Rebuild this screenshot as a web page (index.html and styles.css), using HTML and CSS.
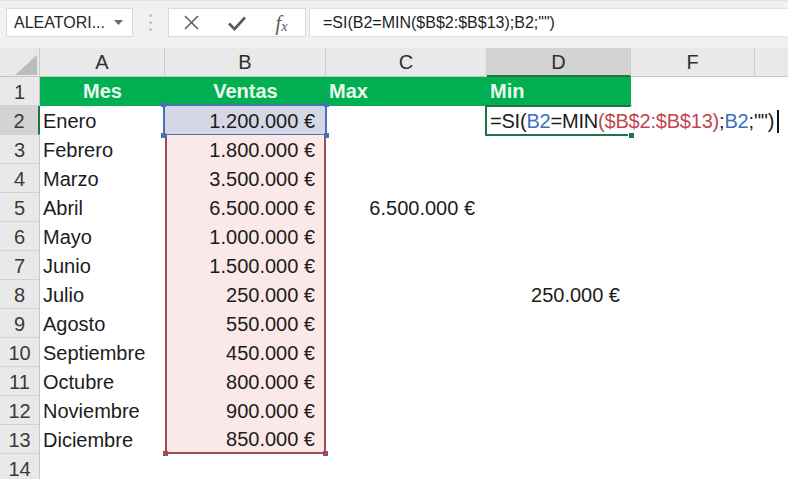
FILE: index.html
```html
<!DOCTYPE html>
<html lang="es">
<head>
<meta charset="utf-8">
<title>Excel MIN</title>
<link rel="stylesheet" href="styles.css">
</head>
<body>
<div class="toolbar">
  <div class="namebox">
    <span class="nb-text">ALEATORI...</span>
    <svg class="nb-arrow" width="9" height="5" viewBox="0 0 9 5"><polygon points="0,0 9,0 4.5,5" fill="#6a6a6a"/></svg>
  </div>
  <div class="grip"><i></i><i></i><i></i></div>
  <div class="fxbox">
    <span class="slot"><svg width="17" height="17" viewBox="0 0 17 17"><path d="M2 2 L15 15 M15 2 L2 15" stroke="#5a5a5a" stroke-width="1.5" fill="none"/></svg></span>
    <span class="slot"><svg width="20" height="16" viewBox="0 0 20 16"><path d="M2 8.5 L7.5 14 L18 2.5" stroke="#5a5a5a" stroke-width="2.6" fill="none" stroke-linejoin="miter"/></svg></span>
    <span class="slot"><span class="fx">f<span class="fxx">x</span></span></span>
  </div>
  <div class="formula">=SI(B2=MIN($B$2:$B$13);B2;"")</div>
</div>

<div class="sheet">
  <div class="ch corner"><svg width="40" height="29" viewBox="0 0 40 29"><polygon points="37,7 37,27 15,27" fill="#bcbcbc"/></svg></div>
  <div class="ch">A</div>
  <div class="ch">B</div>
  <div class="ch">C</div>
  <div class="ch selh">D</div>
  <div class="ch">F</div>
  <div class="ch last"></div>

  <div class="rh">1</div>
  <div class="c g ctr hd">Mes</div>
  <div class="c g ctr hd">Ventas</div>
  <div class="c g hd">Max</div>
  <div class="c g hd">Min</div>
  <div class="c"></div>
  <div class="c"></div>

  <div class="rh selr">2</div>
  <div class="c">Enero</div>
  <div class="c r blue">1.200.000 €<span class="hnd tl bh"></span><span class="hnd tr bh"></span><span class="hnd bl bh"></span><span class="hnd br bh"></span></div>
  <div class="c"></div>
  <div class="c active"><span class="edit">=SI(<span class="rb">B2</span>=MIN<span class="rr">($B$2:$B$13)</span>;<span class="rb">B2</span>;"")<span class="caret"></span></span><span class="fill"></span></div>
  <div class="c"></div>
  <div class="c"></div>

  <div class="rh">3</div>
  <div class="c">Febrero</div>
  <div class="c r rng">1.800.000 €</div>
  <div class="c"></div><div class="c"></div><div class="c"></div><div class="c"></div>

  <div class="rh">4</div>
  <div class="c">Marzo</div>
  <div class="c r rng">3.500.000 €</div>
  <div class="c"></div><div class="c"></div><div class="c"></div><div class="c"></div>

  <div class="rh">5</div>
  <div class="c">Abril</div>
  <div class="c r rng">6.500.000 €</div>
  <div class="c r pad12">6.500.000 €</div>
  <div class="c"></div><div class="c"></div><div class="c"></div>

  <div class="rh">6</div>
  <div class="c">Mayo</div>
  <div class="c r rng">1.000.000 €</div>
  <div class="c"></div><div class="c"></div><div class="c"></div><div class="c"></div>

  <div class="rh">7</div>
  <div class="c">Junio</div>
  <div class="c r rng">1.500.000 €</div>
  <div class="c"></div><div class="c"></div><div class="c"></div><div class="c"></div>

  <div class="rh">8</div>
  <div class="c">Julio</div>
  <div class="c r rng">250.000 €</div>
  <div class="c"></div>
  <div class="c r">250.000 €</div>
  <div class="c"></div><div class="c"></div>

  <div class="rh">9</div>
  <div class="c">Agosto</div>
  <div class="c r rng">550.000 €</div>
  <div class="c"></div><div class="c"></div><div class="c"></div><div class="c"></div>

  <div class="rh">10</div>
  <div class="c">Septiembre</div>
  <div class="c r rng">450.000 €</div>
  <div class="c"></div><div class="c"></div><div class="c"></div><div class="c"></div>

  <div class="rh">11</div>
  <div class="c">Octubre</div>
  <div class="c r rng">800.000 €</div>
  <div class="c"></div><div class="c"></div><div class="c"></div><div class="c"></div>

  <div class="rh">12</div>
  <div class="c">Noviembre</div>
  <div class="c r rng">900.000 €</div>
  <div class="c"></div><div class="c"></div><div class="c"></div><div class="c"></div>

  <div class="rh">13</div>
  <div class="c">Diciembre</div>
  <div class="c r rng end">850.000 €<span class="hnd bl rh2"></span><span class="hnd br rh2"></span></div>
  <div class="c"></div><div class="c"></div><div class="c"></div><div class="c"></div>

  <div class="rh">14</div>
  <div class="c"></div><div class="c"></div><div class="c"></div><div class="c"></div><div class="c"></div><div class="c"></div>
</div>
</body>
</html>
```

FILE: styles.css
```css
html, body {
  margin: 0;
  padding: 0;
}
body {
  width: 788px;
  height: 479px;
  overflow: hidden;
  background: #f1f1f1;
  font-family: "Liberation Sans", Arial, sans-serif;
  color: #1c1c1c;
}

/* ---------- toolbar ---------- */
.toolbar {
  height: 44px;
  box-sizing: border-box;
  padding: 7px 0 0 6px;
  display: flex;
  align-items: flex-start;
  border-top: 1px solid #e2e2e2;
}
.namebox {
  width: 127px;
  height: 29px;
  box-sizing: border-box;
  background: #fff;
  border: 1px solid #dadada;
  display: flex;
  align-items: center;
  padding-left: 7px;
  padding-right: 9px;
}
.nb-text {
  flex: 1;
  font-size: 16px;
  color: #262626;
}
.nb-arrow {
  display: block;
}
.grip {
  width: 35px;
  height: 29px;
  display: flex;
  flex-direction: column;
  align-items: center;
  justify-content: center;
  gap: 4px;
}
.grip i {
  display: block;
  width: 3px;
  height: 3px;
  border-radius: 50%;
  background: #c2c2c2;
}
.fxbox {
  width: 138px;
  height: 29px;
  box-sizing: border-box;
  background: #fff;
  border: 1px solid #dadada;
  display: flex;
  margin-right: 3px;
}
.slot {
  width: 45px;
  display: flex;
  align-items: center;
  justify-content: center;
}
.slot svg {
  display: block;
}
.fx {
  font-family: "Liberation Serif", "Times New Roman", serif;
  font-style: italic;
  font-size: 20px;
  color: #5a5a5a;
  line-height: 1;
}
.fxx {
  font-size: 14px;
  position: relative;
  top: 1px;
}
.formula {
  flex: 1;
  height: 29px;
  box-sizing: border-box;
  background: #fff;
  border-left: 1px solid #dadada;
  border-top: 1px solid #e4e4e4;
  border-bottom: 1px solid #e4e4e4;
  padding-left: 13px;
  font-size: 16px;
  line-height: 27px;
  color: #1e1e1e;
  white-space: nowrap;
}

/* ---------- sheet ---------- */
.sheet {
  margin-top: 4px;
  display: grid;
  grid-template-columns: 40px 125px 161px 161px 144px 124px 1fr;
  grid-auto-rows: 29px;
  background: #fff;
}
.ch {
  background: #e9e9e9;
  border-right: 1px solid #cdcdcd;
  border-bottom: 1px solid #c6c6c6;
  box-sizing: border-box;
  font-size: 20px;
  color: #303030;
  text-align: center;
  line-height: 29px;
}
.ch.last {
  border-right: none;
}
.ch.selh {
  background: #d3d3d3;
  border-bottom: 2px solid #217346;
}
.corner svg {
  display: block;
}
.rh {
  background: #e9e9e9;
  border-right: 1px solid #c6c6c6;
  border-bottom: 1px solid #d2d2d2;
  box-sizing: border-box;
  font-size: 20px;
  color: #3a3a3a;
  text-align: center;
  line-height: 30px;
}
.rh.selr {
  background: #d3d3d3;
  border-right: 2px solid #217346;
}
.c {
  position: relative;
  box-sizing: border-box;
  font-size: 20px;
  line-height: 30px;
  padding: 0 3px;
  white-space: nowrap;
}
.c.r {
  text-align: right;
  padding-right: 11px;
}
.c.pad12 {
  padding-right: 12px;
}
.c.ctr {
  text-align: center;
}
.g {
  background: #00b050;
}
.hd {
  font-weight: bold;
  color: #e8f9ee;
  line-height: 28px;
}

/* referenced ranges */
.rng {
  background: #fbe9e9;
  border-left: 2px solid #a04b5a;
  border-right: 2px solid #a04b5a;
}
.c.r.rng {
  padding-right: 9px;
}
.rng.end {
  border-bottom: 2px solid #a04b5a;
  line-height: 28px;
}
.blue {
  background: #d6d7e6;
}
.blue::before {
  content: "";
  position: absolute;
  top: -2px;
  bottom: -1px;
  left: -2px;
  right: -1px;
  border: 2px solid #4a71b6;
  pointer-events: none;
}
.hnd {
  position: absolute;
  width: 5px;
  height: 5px;
  z-index: 3;
}
.hnd.bh { background: #4a71b6; }
.hnd.rh2 { background: #a04b5a; }
.hnd.tl { top: -4px; left: -4px; }
.hnd.tr { top: -4px; right: -3px; }
.hnd.bl { bottom: -3px; left: -4px; }
.hnd.br { bottom: -3px; right: -3px; }
.rng .hnd.bl { left: -4px; bottom: -4px; }
.rng .hnd.br { right: -4px; bottom: -4px; }

/* active editing cell */
.active::before {
  content: "";
  position: absolute;
  top: -1px;
  bottom: -1px;
  left: -2px;
  right: -1px;
  border: 2px solid #217346;
  border-right-color: transparent;
}
.edit {
  position: relative;
  z-index: 2;
  color: #1c1c1c;
  display: inline-flex;
  align-items: center;
  height: 29px;
  letter-spacing: -0.2px;
}
.rb { color: #3d6fc0; }
.rr { color: #c0474f; }
.caret {
  display: inline-block;
  width: 0;
  height: 23px;
  border-left: 2px solid #111;
  margin-left: 3px;
}
.fill {
  position: absolute;
  right: -4px;
  bottom: -4px;
  width: 5px;
  height: 5px;
  background: #217346;
  border: 1px solid #fff;
  z-index: 3;
}
```
